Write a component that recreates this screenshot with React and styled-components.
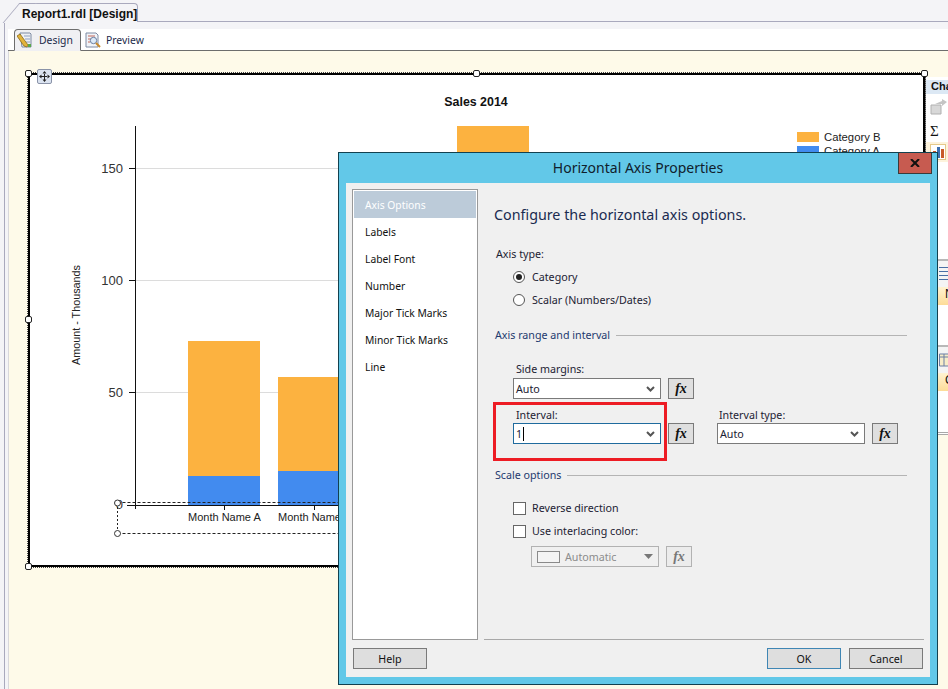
import React from "react";
import styled, { createGlobalStyle } from "styled-components";

const GlobalStyles = createGlobalStyle`
html, body {
    margin: 0;
    padding: 0;
    width: 948px;
    height: 689px;
    overflow: hidden;
    background: #fff;
    font-family: "Noto Sans", "Open Sans", sans-serif;
}
* { box-sizing: border-box; }
`;

const uiFont = `10.7px "Noto Sans", sans-serif`;

const Page = styled.div`
position: relative;
width: 948px;
height: 689px;
overflow: hidden;
display: flex;
flex-direction: column;
background: #f4f4f7;
`;

const DocTabs = styled.div`
height: 21px;
flex: none;
display: flex;
align-items: flex-end;
padding-left: 19px;
`;

const DocTab = styled.div`
position: relative;
z-index: 1;
height: 19px;
width: 119px;
margin-bottom: -1px;
padding: 3px 0 0 3px;
background: #f4f4f7;
border: 1px solid #a9a9bd;
border-left: none;
border-bottom: none;
border-radius: 0 4px 0 0;
font: bold 12px "Liberation Sans", Arial, sans-serif;
color: #111;
white-space: nowrap;
&::before {
    content: "";
    position: absolute;
    z-index: -1;
    left: -8px;
    top: -1px;
    width: 16px;
    height: 19px;
    background: #f4f4f7;
    border-left: 1px solid #a9a9bd;
    border-top: 1px solid #a9a9bd;
    transform: skewX(-40deg);
}
`;

const DocBody = styled.div`
flex: 1;
margin-left: 4px;
border-top: 1px solid #a9a9bd;
border-left: 1px solid #a9a9bd;
padding-left: 3px;
padding-top: 7px;
background: #f4f4f7;
display: flex;
flex-direction: column;
min-height: 0;
`;

const ModeTabs = styled.div`
height: 22px;
flex: none;
display: flex;
align-items: flex-end;
padding-left: 6px;
background: #fff;
border-bottom: 1px solid #6d6d6d;
`;

const ModeTab = styled.div`
height: 22px;
margin-bottom: -1px;
width: 67px;
display: flex;
align-items: center;
gap: ${({ $gap }) => $gap}px;
padding-left: ${({ $active }) => ($active ? 2 : 3)}px;
padding-bottom: ${({ $active }) => ($active ? 1 : 2)}px;
font: 10.4px "Noto Sans", sans-serif;
color: #1c2a4a;
background: ${({ $active }) => ($active ? "#f0f0f3" : "transparent")};
border: ${({ $active }) => ($active ? "1px solid #6d6d6d" : "1px solid transparent")};
border-bottom: ${({ $active }) => ($active ? "1px solid #f0f0f3" : "none")};
border-radius: 4px 4px 0 0;
`;

const Canvas = styled.div`
flex: 1;
min-height: 0;
background: #fefae9;
border-left: 1px solid #d8d8dc;
padding: 22px 0 0 19px;
display: flex;
align-items: flex-start;
overflow: hidden;
`;

const Report = styled.div`
position: relative;
flex: none;
width: 897px;
height: 494px;
background: #fff;
border: 2px solid #000;
outline: 1px dotted #444;
`;

const ChartSvg = styled.svg`
display: block;
width: 100%;
height: 100%;
`;

const Handle = styled.span`
position: absolute;
width: 7px;
height: 7px;
background: #fff;
border: 1px solid #222;
border-radius: 2px;
left: ${({ $x }) => $x}px;
top: ${({ $y }) => $y}px;
`;

const MoveGrip = styled.div`
position: absolute;
left: 7px;
top: -6px;
width: 15px;
height: 15px;
display: flex;
align-items: center;
justify-content: center;
background: #dbe3f0;
border: 1px solid #8a93a8;
border-radius: 2px;
`;

const DataPane = styled.div`
flex: none;
width: 24px;
height: 358px;
margin-top: 4px;
padding-top: 3px;
background: #fff;
border-left: 1px solid #8d8d8d;
border-bottom: 3px double #a8a8a8;
display: flex;
flex-direction: column;
overflow: hidden;
`;

const PaneTitle = styled.div`
height: 14px;
flex: none;
padding-left: 5px;
line-height: 13px;
background: #dce8f4;
font-family: "Liberation Sans", Arial, sans-serif;
font-size: 11px;
font-weight: bold;
color: #111;
white-space: nowrap;
`;

const PaneIcon = styled.div`
height: ${({ $h }) => $h}px;
flex: none;
padding-left: 4px;
display: flex;
align-items: center;
font: 15px "Liberation Serif", serif;
color: #111;
background: ${({ $tint }) => $tint || "#fff"};
`;

const PaneSection = styled.div`
flex: none;
height: 28px;
margin-top: ${({ $top }) => $top}px;
border-top: 2px solid #b8b8b8;
background: #f4f4f4;
padding-left: 13px;
display: flex;
align-items: center;
`;

const PaneField = styled.div`
flex: none;
height: 18px;
padding-left: 19px;
background: linear-gradient(#fff3d2, #fddc98);
font: 12px "Liberation Sans", Arial, sans-serif;
color: #111;
white-space: nowrap;
`;

const Dialog = styled.div`
position: absolute;
left: 338px;
top: 152px;
width: 600px;
height: 533px;
background: #62c8e8;
border: 1px solid #12414f;
padding: 30px 7px 7px 7px;
display: flex;
`;

const TitleText = styled.div`
position: absolute;
left: 0;
right: 0;
top: 5px;
text-align: center;
font: 14px "Noto Sans", sans-serif;
color: #10202c;
`;

const CloseButton = styled.div`
position: absolute;
right: 5px;
top: 0;
width: 34px;
height: 21px;
background: #c75b50;
border: 1px solid #3a3a3a;
border-top: none;
display: flex;
align-items: center;
justify-content: center;
`;

const DialogBody = styled.div`
flex: 1;
background: #f0f0f0;
padding: 6px;
display: grid;
grid-template-columns: 126px 1fr;
grid-template-rows: 451px 1fr;
column-gap: 6px;
`;

const NavList = styled.div`
background: #fff;
border: 1px solid #999;
padding: 1px;
`;

const NavItem = styled.div`
height: 27px;
padding: 7px 0 0 11px;
font: 10.3px "Noto Sans", sans-serif;
color: ${({ $active }) => ($active ? "#fff" : "#111")};
background: ${({ $active }) => ($active ? "#bccbd9" : "transparent")};
`;

const Pane = styled.div`
padding: 0 7px 0 3px;
border-bottom: 1px solid #a8a8a8;
display: flex;
flex-direction: column;
align-items: flex-start;
`;

const Heading = styled.div`
margin: 16px 0 0 7px;
font: 14.3px "Noto Sans", sans-serif;
color: #1a2b50;
`;

const Label = styled.div`
font: ${uiFont};
color: #1c2233;
height: 16px;
line-height: 16px;
margin-left: ${({ $indent }) => $indent || 0}px;
margin-top: ${({ $top }) => $top || 0}px;
`;

const ChoiceRow = styled.div`
display: flex;
align-items: center;
gap: ${({ $gap }) => $gap}px;
height: 16px;
margin-left: ${({ $indent }) => $indent}px;
margin-top: ${({ $top }) => $top}px;
font: ${uiFont};
color: #1c2233;
`;

const Radio = styled.span`
width: 12px;
height: 12px;
border-radius: 50%;
background: #fff;
border: 1px solid #555;
display: flex;
align-items: center;
justify-content: center;
&::after {
    content: "";
    width: 6px;
    height: 6px;
    border-radius: 50%;
    background: ${({ $on }) => ($on ? "#222" : "transparent")};
}
`;

const Check = styled.span`
width: 13px;
height: 13px;
background: #fff;
border: 1px solid #666;
`;

const Section = styled.div`
align-self: stretch;
display: flex;
align-items: center;
gap: 6px;
margin: ${({ $top }) => $top}px 10px 0 8px;
height: 16px;
font: ${uiFont};
color: #1e3a6e;
&::after {
    content: "";
    flex: 1;
    height: 1px;
    background: #b4b4b4;
}
`;

const FieldRow = styled.div`
position: relative;
display: flex;
align-items: flex-start;
margin-left: ${({ $indent }) => $indent}px;
margin-top: ${({ $top }) => $top || 0}px;
`;

const FieldGroup = styled.div`
display: flex;
flex-direction: column;
width: ${({ $w }) => $w}px;
`;

const FieldLine = styled.div`
display: flex;
align-items: center;
gap: 7px;
`;

const Select = styled.div`
width: ${({ $w }) => $w}px;
height: 21px;
flex: none;
background: ${({ $off }) => ($off ? "#f0f0f0" : "#fff")};
border: 1px solid ${({ $focus, $off }) => ($focus ? "#1f6b9e" : $off ? "#b2b2b2" : "#7a7a7a")};
padding-left: 2px;
padding-right: 5px;
display: flex;
align-items: center;
justify-content: space-between;
font: ${uiFont};
color: ${({ $off }) => ($off ? "#8c8c8c" : "#1c2233")};
`;

const Caret = styled.span`
display: inline-block;
width: 1px;
height: 14px;
background: #000;
margin-left: 1px;
vertical-align: -3px;
`;

const Swatch = styled.span`
display: inline-block;
width: 23px;
height: 12px;
margin: 0 5px 0 3px;
vertical-align: -2px;
background: #f4f4f4;
border: 1px solid #8a8a8a;
`;

const FxButton = styled.div`
width: 26px;
height: 21px;
flex: none;
border: 1px solid ${({ $off }) => ($off ? "#b2b2b2" : "#7a7a7a")};
display: flex;
align-items: center;
justify-content: center;
font: italic bold 14px "Liberation Serif", serif;
color: ${({ $off }) => ($off ? "#777" : "#111")};
background: ${({ $off }) => ($off ? "#ececec" : "#dfdfdf")};
`;

const RedBox = styled.div`
position: absolute;
left: -20px;
top: -5px;
width: 174px;
height: 59px;
border: 3px solid #ed1c24;
pointer-events: none;
`;

const Footer = styled.div`
grid-column: 1 / -1;
display: flex;
justify-content: space-between;
align-items: flex-start;
padding: 8px 1px 0 1px;
`;

const FooterRight = styled.div`
display: flex;
gap: 8px;
`;

const Button = styled.div`
width: 74px;
height: 21px;
background: #dedede;
border: 1px solid ${({ $primary }) => ($primary ? "#3f86b4" : "#7a7a7a")};
display: flex;
align-items: center;
justify-content: center;
font: ${uiFont};
color: #111;
`;

function Chevron({ off }) {
    if (off) {
        return (
            <svg width="9" height="5" viewBox="0 0 9 5"><path d="M0 0h9L4.5 5z" fill="#777" /></svg>
        );
    }
    return (
        <svg width="9" height="6" viewBox="0 0 9 6"><path d="M1 1l3.5 3.5L8 1" fill="none" stroke="#555" strokeWidth="2" /></svg>
    );
}

function SelectBox({ w, value, focus, caret }) {
    return (
        <Select $w={w} $focus={focus}>
            <span>{value}{caret && <Caret />}</span>
            <Chevron />
        </Select>
    );
}

function Chart() {
    // drawn in page coordinates, the report's content box starts at 30,75
    return (
        <ChartSvg viewBox="0 0 893 490">
            <g transform="translate(-30 -75)" fontFamily='"Liberation Sans", Arial, sans-serif'>
                <text x="476" y="106" textAnchor="middle" fontSize="12.4" fontWeight="bold" fill="#111">Sales 2014</text>

                {[168, 280, 392].map((y) => <line key={y} x1="129" x2="345" y1={y + 0.5} y2={y + 0.5} stroke="#dcdcdc" />)}
                {[168, 280, 392].map((y) => <line key={y} x1="129" x2="135" y1={y + 0.5} y2={y + 0.5} stroke="#111" />)}
                <line x1="135.5" x2="135.5" y1="126" y2="509" stroke="#111" />

                <rect x="188" y="341" width="72" height="135" fill="#fcb240" />
                <rect x="188" y="476" width="72" height="29" fill="#428bef" />
                <rect x="278" y="377" width="72" height="94" fill="#fcb240" />
                <rect x="278" y="471" width="72" height="34" fill="#428bef" />
                <rect x="457" y="126" width="72" height="40" fill="#fcb240" />

                <line x1="127" x2="345" y1="505.5" y2="505.5" stroke="#111" />
                <line x1="224.5" x2="224.5" y1="505" y2="510" stroke="#111" />
                <line x1="314.5" x2="314.5" y1="505" y2="510" stroke="#111" />

                <text x="123" y="173" textAnchor="end" fontSize="13" fill="#333">150</text>
                <text x="123" y="285" textAnchor="end" fontSize="13" fill="#333">100</text>
                <text x="123" y="397" textAnchor="end" fontSize="13" fill="#333">50</text>
                <text x="123" y="509" textAnchor="end" fontSize="13" fill="#333">0</text>
                <text x="80" y="315" textAnchor="middle" fontSize="10.8" fill="#222" transform="rotate(-90 80 315)">Amount - Thousands</text>

                <text x="188" y="521" fontSize="11" fill="#222">Month Name A</text>
                <text x="278" y="521" fontSize="11" fill="#222">Month Name B</text>

                <rect x="797" y="132" width="22" height="10" fill="#fcb240" />
                <text x="824" y="141" fontSize="11.3" fill="#222">Category B</text>
                <rect x="797" y="146" width="22" height="10" fill="#428bef" />
                <text x="824" y="155" fontSize="11.3" fill="#222">Category A</text>

                <line x1="117.5" x2="345" y1="502.5" y2="502.5" stroke="#222" strokeDasharray="3 2" />
                <line x1="117.5" x2="345" y1="533.5" y2="533.5" stroke="#222" strokeDasharray="3 2" />
                <line x1="117.5" x2="117.5" y1="503" y2="533" stroke="#222" strokeDasharray="2 2" />
                <circle cx="117.5" cy="503" r="3" fill="#fff" stroke="#333" />
                <circle cx="117.5" cy="533.5" r="3" fill="#fff" stroke="#333" />
            </g>
        </ChartSvg>
    );
}

export default function App() {
    return (
        <Page>
            <GlobalStyles />
            <DocTabs>
                <DocTab>Report1.rdl [Design]</DocTab>
            </DocTabs>
            <DocBody>
                <ModeTabs>
                    <ModeTab $active $gap={7}>
                        <svg width="15" height="16" viewBox="0 0 15 16">
                            <path d="M3 1h10l1 1v13H5z" fill="#eef0f4" stroke="#7d8aa3" />
                            <path d="M7 4h6M8 7h5M9 10h4" stroke="#8fa0c0" />
                            <path d="M0 4l3-2 8 11-1 2-3-1z" fill="#e2b43c" stroke="#8c6a18" strokeWidth=".8" />
                            <rect x="11" y="12" width="3" height="3" fill="#59a84a" />
                        </svg>
                        Design
                    </ModeTab>
                    <ModeTab $gap={5}>
                        <svg width="16" height="16" viewBox="0 0 16 16">
                            <path d="M1 1h10l2 2v12H1z" fill="#f1f3f7" stroke="#7d8aa3" />
                            <path d="M3 4h7M3 7h3M3 10h2" stroke="#c0665a" />
                            <circle cx="8.5" cy="8.5" r="3.2" fill="#dceaf8" stroke="#6b7fa0" />
                            <path d="M11 11l4 4" stroke="#c88a2c" strokeWidth="2" />
                        </svg>
                        Preview
                    </ModeTab>
                </ModeTabs>
                <Canvas>
                    <Report>
                        <Chart />
                        <Handle $x={-5} $y={-5} />
                        <Handle $x={443} $y={-5} />
                        <Handle $x={891} $y={-5} />
                        <Handle $x={-5} $y={241} />
                        <Handle $x={-5} $y={488} />
                        <Handle $x={443} $y={488} />
                        <Handle $x={891} $y={488} />
                        <MoveGrip>
                            <svg width="11" height="11" viewBox="0 0 11 11">
                                <path d="M5.5 0L3.5 2.5h4zM5.5 11l-2-2.5h4zM0 5.5L2.5 3.5v4zM11 5.5L8.5 3.5v4zM5 2h1v7H5zM2 5h7v1H2z" fill="#222" />
                            </svg>
                        </MoveGrip>
                    </Report>
                    <DataPane>
                        <PaneTitle>Chart Data</PaneTitle>
                        <PaneIcon $h={26}>
                            <svg width="17" height="16" viewBox="0 0 17 16">
                                <path d="M1 6h10v9H1z" fill="#d8d8d8" stroke="#b0b0b0" />
                                <path d="M5 5l7-3v-2l5 3-5 4V5z" fill="#c4c4c4" />
                            </svg>
                        </PaneIcon>
                        <PaneIcon $h={22}>Σ</PaneIcon>
                        <PaneIcon $h={20} $tint="#fdf3dc">
                            <svg width="16" height="16" viewBox="0 0 16 16">
                                <rect x=".5" y=".5" width="15" height="15" fill="#fff" stroke="#e5c98a" />
                                <rect x="3" y="7" width="3" height="7" fill="#c85a28" />
                                <rect x="7" y="3" width="3" height="11" fill="#3b6fb0" />
                                <rect x="11" y="5" width="3" height="9" fill="#c85a28" />
                            </svg>
                        </PaneIcon>
                        <PaneSection $top={97}>
                            <svg width="10" height="14" viewBox="0 0 10 14">
                                <path d="M0 .5h9.5v12H0M0 4.5h9.5M0 8.5h9.5" fill="none" stroke="#4a6fa5" />
                            </svg>
                        </PaneSection>
                        <PaneField>N</PaneField>
                        <PaneSection $top={40}>
                            <svg width="10" height="14" viewBox="0 0 10 14">
                                <path d="M.5 1h9v12h-9zM5 1v12M.5 4h9" fill="#f6ecc8" stroke="#6a7fa5" />
                            </svg>
                        </PaneSection>
                        <PaneField>C</PaneField>
                    </DataPane>
                </Canvas>
            </DocBody>

            <Dialog>
                <TitleText>Horizontal Axis Properties</TitleText>
                <CloseButton>
                    <svg width="10" height="8" viewBox="0 0 10 8">
                        <path d="M1 0l4 4 4-4M1 8l4-4 4 4" fill="none" stroke="#111" strokeWidth="2" />
                    </svg>
                </CloseButton>
                <DialogBody>
                    <NavList>
                        <NavItem $active>Axis Options</NavItem>
                        <NavItem>Labels</NavItem>
                        <NavItem>Label Font</NavItem>
                        <NavItem>Number</NavItem>
                        <NavItem>Major Tick Marks</NavItem>
                        <NavItem>Minor Tick Marks</NavItem>
                        <NavItem>Line</NavItem>
                    </NavList>
                    <Pane>
                        <Heading>Configure the horizontal axis options.</Heading>
                        <Label $indent={9} $top={22}>Axis type:</Label>
                        <ChoiceRow $indent={26} $top={7} $gap={7}><Radio $on />Category</ChoiceRow>
                        <ChoiceRow $indent={26} $top={7} $gap={7}><Radio />Scalar (Numbers/Dates)</ChoiceRow>
                        <Section $top={19}>Axis range and interval</Section>
                        <Label $indent={29} $top={18}>Side margins:</Label>
                        <FieldRow $indent={26} $top={1}>
                            <FieldLine>
                                <SelectBox w={148} value="Auto" />
                                <FxButton>fx</FxButton>
                            </FieldLine>
                        </FieldRow>
                        <FieldRow $indent={26} $top={8}>
                            <RedBox />
                            <FieldGroup $w={204}>
                                <Label $indent={3}>Interval:</Label>
                                <FieldLine>
                                    <SelectBox w={148} value="1" focus caret />
                                    <FxButton>fx</FxButton>
                                </FieldLine>
                            </FieldGroup>
                            <FieldGroup $w={181}>
                                <Label $indent={2}>Interval type:</Label>
                                <FieldLine>
                                    <SelectBox w={148} value="Auto" />
                                    <FxButton>fx</FxButton>
                                </FieldLine>
                            </FieldGroup>
                        </FieldRow>
                        <Section $top={23}>Scale options</Section>
                        <ChoiceRow $indent={26} $top={17} $gap={6}><Check />Reverse direction</ChoiceRow>
                        <ChoiceRow $indent={26} $top={7} $gap={6}><Check />Use interlacing color:</ChoiceRow>
                        <FieldRow $indent={44} $top={7}>
                            <FieldLine>
                                <Select $w={128} $off>
                                    <span><Swatch />Automatic</span>
                                    <Chevron off />
                                </Select>
                                <FxButton $off>fx</FxButton>
                            </FieldLine>
                        </FieldRow>
                    </Pane>
                    <Footer>
                        <Button>Help</Button>
                        <FooterRight>
                            <Button $primary>OK</Button>
                            <Button>Cancel</Button>
                        </FooterRight>
                    </Footer>
                </DialogBody>
            </Dialog>
        </Page>
    );
}
